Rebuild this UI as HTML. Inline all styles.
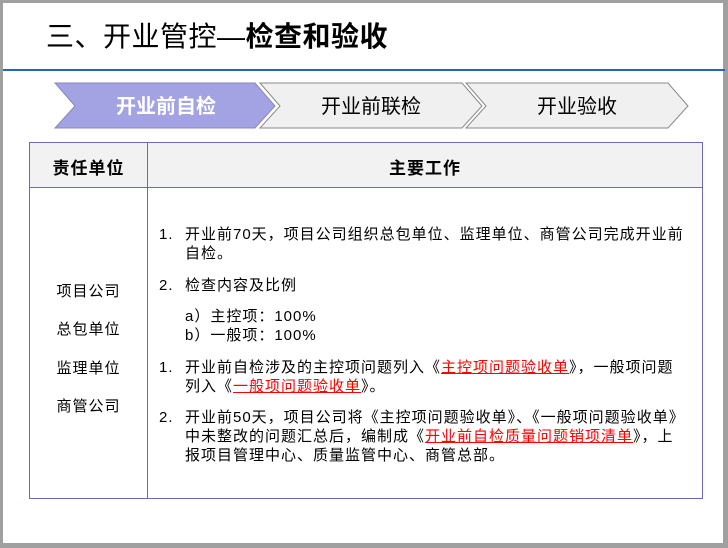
<!DOCTYPE html>
<html><head><meta charset="utf-8"><style>
*{margin:0;padding:0;box-sizing:border-box}
body{width:728px;height:548px;background:#a0a0a0;position:relative;overflow:hidden;font-family:"Liberation Sans","Noto Sans CJK SC",sans-serif;color:#000}
.slide{position:absolute;left:3px;top:3px;width:720px;height:540px;background:#fff}
.t{position:absolute;white-space:nowrap}
.red{color:#f00;text-decoration:underline}
</style></head><body>
<div class="slide"></div>
<div class="t" style="left:46px;top:20px;font-size:28px;line-height:34px;letter-spacing:0.5px">三、开业管控—<b>检查和验收</b></div>
<div style="position:absolute;left:3px;top:69px;width:722px;height:2px;background:#2a62b8"></div>
<svg style="position:absolute;left:0;top:0" width="728" height="140">
<polygon points="55,83 255,83 275,106 255,128 55,128 75,106" fill="#a3a3e3" stroke="#8888bb"/>
<polygon points="260,83 462,83 482,106 462,128 260,128 280,106" fill="#f0f0f0" stroke="#888"/>
<polygon points="466,83 668,83 688,106 668,128 466,128 486,106" fill="#f0f0f0" stroke="#888"/>
<text x="166" y="113" font-size="20" font-weight="bold" fill="#fff" text-anchor="middle" font-family="Liberation Sans,Noto Sans CJK SC,sans-serif">开业前自检</text>
<text x="371" y="113" font-size="20" fill="#000" text-anchor="middle" font-family="Liberation Sans,Noto Sans CJK SC,sans-serif">开业前联检</text>
<text x="577" y="113" font-size="20" fill="#000" text-anchor="middle" font-family="Liberation Sans,Noto Sans CJK SC,sans-serif">开业验收</text>
</svg>
<div style="position:absolute;left:29px;top:142px;width:674px;height:357px;border:1px solid #6a6ab8"></div>
<div style="position:absolute;left:30px;top:143px;width:672px;height:45px;background:#f2f2f2;border-bottom:1px solid #6a6ab8"></div>
<div style="position:absolute;left:147px;top:143px;width:1px;height:355px;background:#6a6ab8"></div>
<div class="t" style="left:30px;top:154px;width:117px;text-align:center;font-size:17px;letter-spacing:1px;font-weight:bold">责任单位</div>
<div class="t" style="left:148px;top:154px;width:554px;text-align:center;font-size:17px;letter-spacing:1px;font-weight:bold">主要工作</div>
<div class="t" style="left:30px;top:273px;width:117px;text-align:center;font-size:15px;letter-spacing:1px;line-height:38.3px">项目公司<br>总包单位<br>监理单位<br>商管公司</div>
<div class="t" style="left:159px;top:225px;font-size:15px;letter-spacing:1px;line-height:19px">
<div style="position:absolute;left:0;top:0">1.</div>
<div style="position:absolute;left:26px;top:0">开业前70天，项目公司组织总包单位、监理单位、商管公司完成开业前<br>自检。</div>
<div style="position:absolute;left:0;top:51px">2.</div>
<div style="position:absolute;left:26px;top:51px">检查内容及比例</div>
<div style="position:absolute;left:26px;top:82px">a）主控项：100%<br>b）一般项：100%</div>
<div style="position:absolute;left:0;top:133px">1.</div>
<div style="position:absolute;left:26px;top:133px">开业前自检涉及的主控项问题列入《<span class="red">主控项问题验收单</span>》，一般项问题<br>列入《<span class="red">一般项问题验收单</span>》。</div>
<div style="position:absolute;left:0;top:183px">2.</div>
<div style="position:absolute;left:26px;top:183px">开业前50天，项目公司将《主控项问题验收单》、《一般项问题验收单》<br>中未整改的问题汇总后，编制成《<span class="red">开业前自检质量问题销项清单</span>》，上<br>报项目管理中心、质量监管中心、商管总部。</div>
</div>
</body></html>
